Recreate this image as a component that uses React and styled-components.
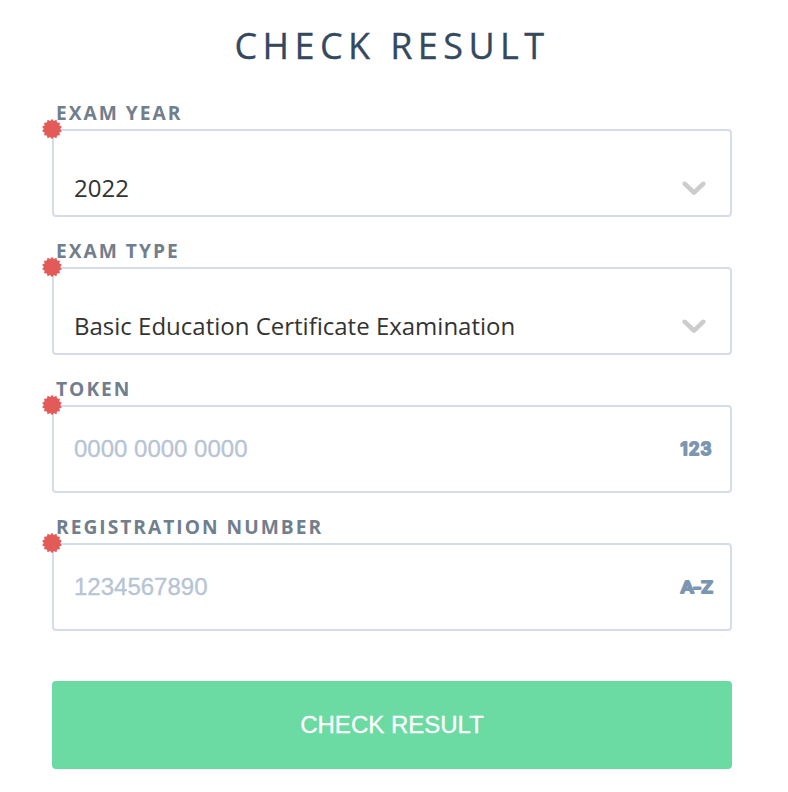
import React from 'react'
import styled, { createGlobalStyle } from 'styled-components'

const GlobalStyle = createGlobalStyle`
* {
    box-sizing: border-box;
}
body {
    margin: 0;
    background: #fff;
    font-family: "Open Sans", "Noto Sans", sans-serif;
}
`;

const Container = styled.main`
width: 788px;
height: 792px;
padding: 21px 56px 0 52px;
`;
const Title = styled.h1`
margin: 0;
height: 50px;
line-height: 50px;
font-size: 36px;
font-weight: 400;
letter-spacing: 5.4px;
text-align: center;
color: #34495e;
-webkit-text-stroke: 0.3px #34495e;
`;
const Form = styled.form`
display: flex;
flex-direction: column;
gap: 22px;
padding-top: 30px;
`;
const Field = styled.div`
display: flex;
flex-direction: column;
`;
const Label = styled.label`
height: 28px;
padding: 0 4px;
line-height: 24px;
font-size: 19.2px;
font-weight: 700;
letter-spacing: 2px;
color: #717e8c;
`;
const Control = styled.div`
position: relative;
display: flex;
align-items: center;
justify-content: space-between;
height: 88px;
padding: 0 16px 0 20px;
border: 2px solid #d5dee8;
border-radius: 4px;
`;
const Value = styled.div`
padding-top: 29px;
line-height: 34px;
font-size: 24px;
color: #333;
`;
const Chevron = styled.svg`
width: 40px;
height: 40px;
margin-top: 27px;
fill: #ccc;
`;
const Input = styled.input`
flex: 1;
min-width: 0;
height: 40px;
padding: 0;
border: 0;
outline: 0;
background: transparent;
font-family: "Liberation Sans", Arial, sans-serif;
font-size: 24px;
color: #333;
&::placeholder {
    color: #b6c4d4;
    opacity: 1;
    -webkit-text-stroke: 0.3px #b6c4d4;
}
`;
const Hint = styled.svg`
width: 36px;
height: 24px;
font-family: Inter, sans-serif;
font-weight: 500;
fill: #7c95b0;
stroke: #7c95b0;
stroke-width: 1.9px;
stroke-linejoin: round;
`;
const Required = styled.svg`
position: absolute;
top: -12px;
left: -12px;
width: 20px;
height: 20px;
fill: #e35b58;
`;
const Button = styled.button`
height: 88px;
margin-top: 28px;
padding: 0;
border: 0;
border-radius: 4px;
background: #6bdaa3;
font-family: "Liberation Sans", Arial, sans-serif;
font-size: 24px;
color: #fff;
-webkit-text-stroke: 0.3px #fff;
`;

const POINTS = 14;
const burst = Array.from({ length: POINTS * 2 }, (_, i) => {
    const r = i % 2 ? 8.2 : 10.2;
    const a = (Math.PI * i) / POINTS;
    return `${(10 + r * Math.sin(a)).toFixed(2)},${(10 - r * Math.cos(a)).toFixed(2)}`;
}).join(' ');

const RequiredMark = () => (
    <Required viewBox="0 0 20 20">
        <polygon points={burst} />
    </Required>
)

const SelectField = ({ label, value }) => (
    <Field>
        <Label>{label}</Label>
        <Control>
            <RequiredMark />
            <Value>{value}</Value>
            <Chevron viewBox="0 0 20 20">
                <path d="M4.516 7.548c0.436-0.446 1.043-0.481 1.576 0l3.908 3.747 3.908-3.747c0.533-0.481 1.141-0.446 1.574 0 0.436 0.445 0.408 1.197 0 1.615-0.406 0.418-4.695 4.502-4.695 4.502-0.217 0.223-0.502 0.335-0.787 0.335s-0.57-0.112-0.789-0.335c0 0-4.287-4.084-4.695-4.502s-0.436-1.17 0-1.615z" />
            </Chevron>
        </Control>
    </Field>
)

const TextField = ({ label, placeholder, hint, hintSize, hintSpacing }) => (
    <Field>
        <Label>{label}</Label>
        <Control>
            <RequiredMark />
            <Input placeholder={placeholder} />
            <Hint viewBox="0 0 36 24">
                <text x="2.6" y="18.4" fontSize={hintSize} textLength="32" lengthAdjust="spacingAndGlyphs" letterSpacing={hintSpacing}>{hint}</text>
            </Hint>
        </Control>
    </Field>
)

const App = () => {
    return (
        <>
            <GlobalStyle />
            <Container>
                <Title>CHECK RESULT</Title>
                <Form>
                    <SelectField label="EXAM YEAR" value="2022" />
                    <SelectField label="EXAM TYPE" value="Basic Education Certificate Examination" />
                    <TextField label="TOKEN" placeholder="0000 0000 0000" hint="123" hintSize="17" hintSpacing="1" />
                    <TextField label="REGISTRATION NUMBER" placeholder="1234567890" hint="A-Z" hintSize="16" hintSpacing="-0.5" />
                    <Button type="button">CHECK RESULT</Button>
                </Form>
            </Container>
        </>
    )
}

export default App
